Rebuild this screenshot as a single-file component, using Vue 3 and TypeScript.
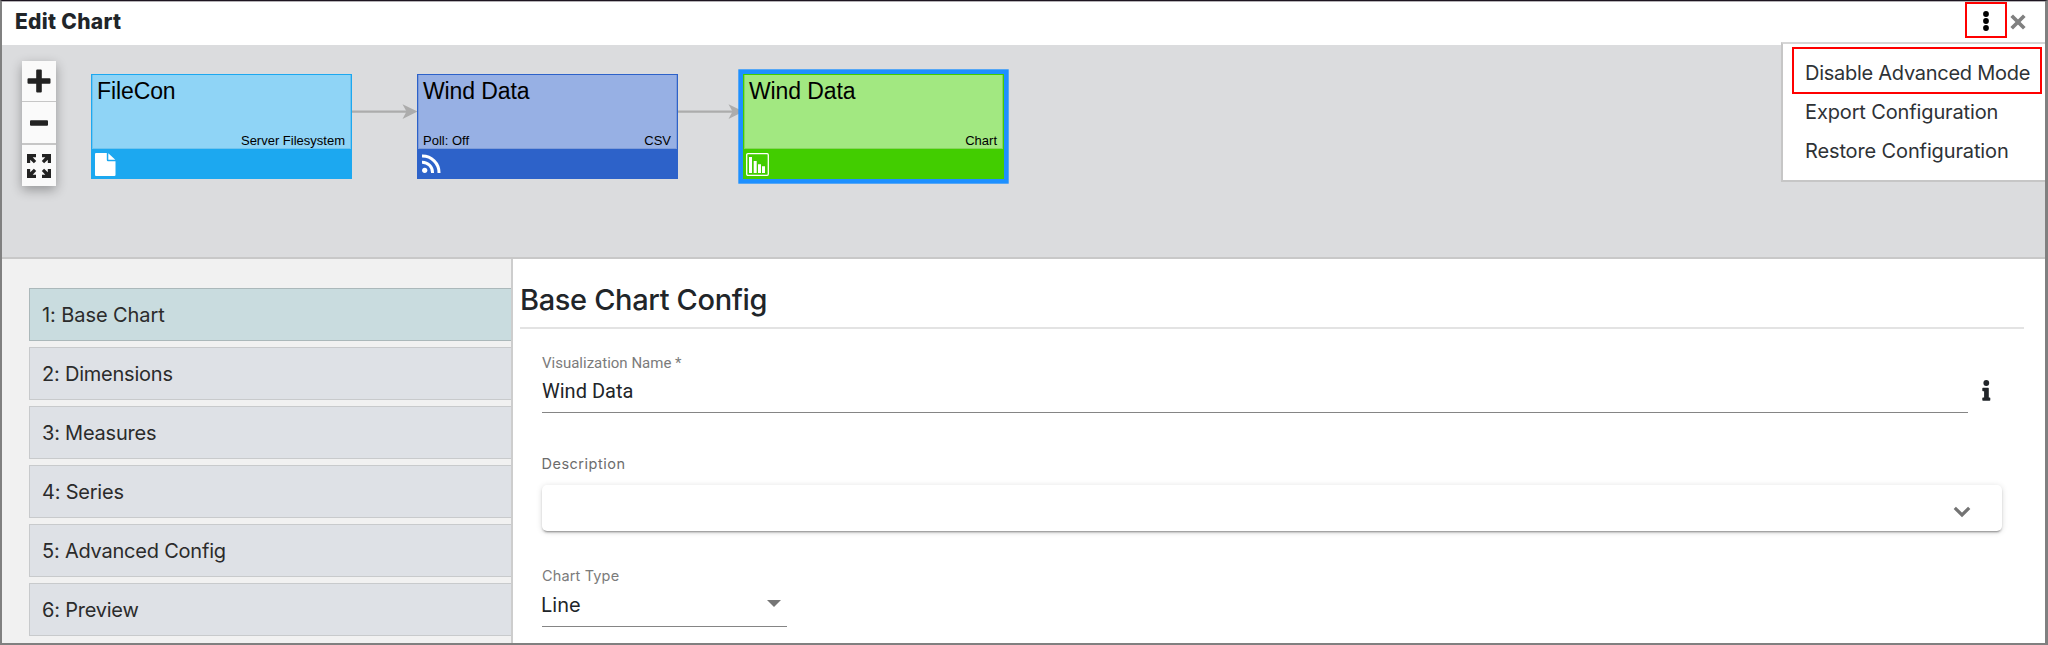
<script setup lang="ts">
import { ref } from 'vue'

interface FlowNode {
  id: string
  title: string
  kind: string
  poll?: string
  icon: 'file' | 'feed' | 'chart'
}

const nodes: FlowNode[] = [
  { id: 'filecon', title: 'FileCon', kind: 'Server Filesystem', icon: 'file' },
  { id: 'csv', title: 'Wind Data', kind: 'CSV', poll: 'Poll: Off', icon: 'feed' },
  { id: 'chart', title: 'Wind Data', kind: 'Chart', icon: 'chart' },
]
const steps = ['Base Chart', 'Dimensions', 'Measures', 'Series', 'Advanced Config', 'Preview']
const menu = ['Disable Advanced Mode', 'Export Configuration', 'Restore Configuration']
const activeStep = ref(0)
</script>

<template>
  <div class="dialog">
    <header class="header">
      <h1 class="heading">Edit Chart</h1>
      <div class="actions">
        <button class="more" aria-label="More">
          <svg width="8" height="22" viewBox="0 0 8 22">
            <circle cx="4" cy="4" r="2.9" /><circle cx="4" cy="11" r="2.9" /><circle cx="4" cy="18" r="2.9" />
          </svg>
        </button>
        <button class="close" aria-label="Close">
          <svg width="16" height="16" viewBox="0 0 16 16"><path d="M1.7 1.7 14.3 14.3M14.3 1.7 1.7 14.3" stroke="#808080" stroke-width="3.7" /></svg>
        </button>
      </div>
    </header>

    <section class="canvas">
      <svg class="edges" width="1100" height="212" viewBox="0 0 1100 212">
        <g fill="#acacac" stroke="none">
          <path d="M350 65.5H406V67.7H350zM676 65.5H732V67.7H676z" />
          <path d="M415.5 66.6 400.5 59.2 404.5 66.6 400.5 74zM741.5 66.6 726.5 59.2 730.5 66.6 726.5 74z" />
        </g>
      </svg>
      <div class="zoom">
        <button aria-label="Zoom in">
          <svg width="24" height="24" viewBox="0 0 24 24"><path d="M9.2 1.5Q9.2.5 10.2.5H13.8Q14.8.5 14.8 1.5V9.2H22.5Q23.5 9.2 23.5 10.2V13.8Q23.5 14.8 22.5 14.8H14.8V22.5Q14.8 23.5 13.8 23.5H10.2Q9.2 23.5 9.2 22.5V14.8H1.5Q.5 14.8.5 13.8V10.2Q.5 9.2 1.5 9.2H9.2z" /></svg>
        </button>
        <button aria-label="Zoom out">
          <svg width="24" height="24" viewBox="0 0 24 24"><rect x="3" y="9.3" width="18" height="5.4" rx="1" /></svg>
        </button>
        <button aria-label="Fit">
          <svg width="24" height="24" viewBox="0 0 24 24">
            <g v-for="a in [0, 90, 180, 270]" :key="a" :transform="`rotate(${a} 12 12)`">
              <path d="M0 0H9V3.2H5.7L9.2 6.9 6.9 9.2 3.2 5.7V9H0z" />
            </g>
          </svg>
        </button>
      </div>
      <article v-for="n in nodes" :key="n.id" class="node" :class="n.id">
        <div class="node-body">
          <div class="node-title">{{ n.title }}</div>
          <div class="node-meta"><span>{{ n.poll }}</span><span>{{ n.kind }}</span></div>
        </div>
        <div class="node-foot">
          <svg v-if="n.icon === 'file'" class="ic-file" width="21" height="24" viewBox="0 0 21 24" fill="#fff">
            <path d="M1 0H11.8V7Q11.8 8.2 13 8.2H20.5V22Q20.5 23 19.5 23H1Q0 23 0 22V1Q0 0 1 0zM13.3.2 20.3 6.8H13.3z" />
          </svg>
          <svg v-else-if="n.icon === 'feed'" class="ic-feed" width="20" height="20" viewBox="0 0 20 20" fill="none" stroke="#fff" stroke-width="3">
            <circle cx="2.7" cy="16.3" r="2.6" fill="#fff" stroke="none" />
            <path d="M0 8.2A10.3 10.3 0 0 1 10.5 19M0 2A16.6 16.6 0 0 1 17 19" />
          </svg>
          <svg v-else class="ic-chart" width="23" height="23" viewBox="0 0 23 23" fill="#fff">
            <rect x=".7" y=".7" width="21.6" height="21.6" rx="1.2" fill="none" stroke="#fff" stroke-width="1.3" />
            <path d="M3 4H6V20H3zM7.7 8H10.7V20H7.7zM12 11.2H15V20H12zM16 13.3H19V20H16z" />
          </svg>
        </div>
      </article>
    </section>

    <div class="body">
      <nav class="steps">
        <button v-for="(s, i) in steps" :key="s" class="step" :class="{ active: i === activeStep }" @click="activeStep = i">{{ i + 1 }}: {{ s }}</button>
      </nav>
      <main class="main">
        <h2 class="title">Base Chart Config</h2>
        <div class="row">
          <div class="field name">
            <label class="roboto">Visualization Name *</label>
            <div class="value roboto">Wind Data</div>
          </div>
          <svg class="info" width="9" height="21" viewBox="0 0 9 21" fill="#212529">
            <circle cx="4.3" cy="3" r="2.9" />
            <path d="M1 7.8H6.2Q6.8 7.8 6.8 8.4V17.4H7.6Q8.3 17.4 8.3 18.1V20Q8.3 20.7 7.6 20.7H1Q.3 20.7.3 20V18.1Q.3 17.4 1 17.4H2.1V11.2H1Q.3 11.2.3 10.5V8.5Q.3 7.8 1 7.8z" />
          </svg>
        </div>
        <div class="desc">
          <label class="desc-label">Description</label>
          <div class="panel">
            <svg width="18" height="12" viewBox="0 0 18 12"><path d="M1.8 1.8 9 9 16.2 1.8" fill="none" stroke="#737373" stroke-width="3.2" /></svg>
          </div>
        </div>
        <div class="field type">
          <label>Chart Type</label>
          <div class="value">
            <span>Line</span>
            <svg width="14" height="7" viewBox="0 0 14 7" fill="#757575"><path d="M0 0H14L7 7z" /></svg>
          </div>
        </div>
      </main>
    </div>

    <ul class="menu">
      <li v-for="(m, i) in menu" :key="m" :class="{ marked: i === 0 }">{{ m }}</li>
    </ul>
  </div>
</template>

<style scoped>
*, *::before { box-sizing: border-box; }
button { margin: 0; padding: 0; border: 0; background: none; font: inherit; display: flex; }
svg { display: block; flex: none; }
.dialog {
  position: relative; width: 2048px; height: 645px; overflow: hidden;
  display: flex; flex-direction: column; background: #fff;
  border: 2px solid #808080; border-right-width: 3px; border-top: 1px solid #1d1520;
  font-family: Inter, "Noto Sans", sans-serif; color: #212529;
}
.header {
  height: 44px; flex: none; display: flex; justify-content: space-between;
  border-top: 1px solid #b5b2b6; padding-left: 13px;
}
.heading { margin: 0; font-size: 21px; font-weight: 800; line-height: 40px; letter-spacing: .3px; }
.actions { display: flex; width: 82px; gap: 3px; }
.more { width: 42px; height: 36px; border: 2px solid #f00; align-items: center; justify-content: center; padding-top: 2px; margin-left: 2px; }
.close { padding-top: 12px; }
.canvas { position: relative; height: 214px; flex: none; background: #dbdcde; border-bottom: 2px solid #c8c8c8; }
.edges { position: absolute; left: 0; top: 0; }
.zoom {
  position: absolute; left: 20px; top: 16px; width: 34px;
  display: flex; flex-direction: column; gap: 1px; background: #c6c6c6;
  box-shadow: 0 4px 12px rgba(0, 0, 0, .32);
}
.zoom button { width: 34px; height: 41px; background: #fafafa; align-items: center; justify-content: center; fill: #222; }
.zoom button:first-child { height: 40px; }
.zoom button:last-child { margin-top: 1px; }
.zoom button:last-child svg { margin-top: 1px; }
.node { position: absolute; top: 29px; width: 261px; height: 105px; background: var(--c); padding: 1px; color: #000; font-family: "Liberation Sans", Arial, sans-serif; }
.filecon { --c: #1ca8f0; --l: #8fd4f6; --e: #6fc4ef; left: 89px; }
.csv { --c: #2d62c9; --l: #97b0e4; --e: #7e9cd9; left: 415px; }
.chart { --c: #42cd00; --l: #a2e881; --e: #86d65c; left: 741px; box-shadow: 0 0 0 4.7px #1e90ff; }
.node-body { height: 74px; background: var(--l); border: 1px solid var(--e); border-top: 0; display: flex; flex-direction: column; justify-content: space-between; padding: 3px 5px 0 4px; }
.node-title { font-size: 23px; line-height: 26px; letter-spacing: -.1px; }
.node-meta { display: flex; justify-content: space-between; font-size: 13px; line-height: 14px; }
.node-foot { height: 29px; padding-left: 3px; }
.ic-file { margin-top: 4px; }
.ic-feed { margin: 5px 0 0 1px; }
.ic-chart { margin: 4px 0 0 -1px; }
.node-foot { display: flex; }
.body { flex: 1; min-height: 0; display: flex; }
.steps { width: 511px; flex: none; background: #f1f1f1; border-right: 2px solid #cdcdcd; padding: 29px 0 0 27px; display: flex; flex-direction: column; gap: 6.1px; }
.step { height: 53px; flex: none; background: #dee1e6; border: 1px solid #c8cacc; border-right: 0; align-items: center; padding-left: 12px; font-size: 20px; letter-spacing: -.22px; color: #2b2b2b; }
.step.active { background: #c9dcdf; border-color: #abb8ba; letter-spacing: -.08px; }
.main { flex: 1; padding: 0 21px 0 7px; }
.title { margin: 0; height: 70px; padding-top: 23px; line-height: 36px; font-size: 29px; font-weight: 500; letter-spacing: -.35px; border-bottom: 2px solid #e3e3e3; }
.row { display: flex; padding: 24px 0 0 22px; }
.field { display: flex; flex-direction: column; border-bottom: 1px solid #858585; }
label { font-size: 14.5px; line-height: 20px; color: #7b7b7b; letter-spacing: .15px; }
.name { width: 1426px; height: 60px; }
.value { margin-top: 5px; font-size: 20px; line-height: 26px; display: flex; }
.roboto { font-family: Roboto, sans-serif; letter-spacing: 0; }
label.roboto { font-size: 15px; }
.info { margin: 27px 0 0 14px; }
.desc { padding: 41px 0 0 22px; }
.desc-label { display: block; letter-spacing: .5px; color: #6c6c6c; text-indent: -.5px; }
.panel { margin-top: 11px; width: 1460px; height: 46px; border-radius: 5px; box-shadow: 0 3px 1px -2px rgba(0, 0, 0, .2), 0 2px 2px rgba(0, 0, 0, .16), 0 1px 6px rgba(0, 0, 0, .14); display: flex; justify-content: flex-end; padding: 20.5px 31px 0 0; }
.type { margin: 35px 0 0 22px; width: 245px; height: 61px; }
.type .value { margin-top: 6px; justify-content: space-between; padding-right: 6px; }
.type .value span { margin-left: -1px; }
.type .value svg { margin-top: 8px; }
.menu { position: absolute; right: 0; top: 41px; width: 264px; height: 140px; margin: 0; padding: 10px 0 0; list-style: none; background: #fff; border: 2px solid #c6c6c6; border-top-color: #d6d6d6; border-right: 0; color: #2e3236; font-size: 20px; line-height: 39px; letter-spacing: -.13px; }
.menu li { padding-left: 22px; white-space: nowrap; position: relative; }
.menu .marked { letter-spacing: -.27px; }
.marked::before { content: ""; position: absolute; left: 9px; top: -7px; width: 250px; height: 47px; border: 2px solid #f00; }
</style>
